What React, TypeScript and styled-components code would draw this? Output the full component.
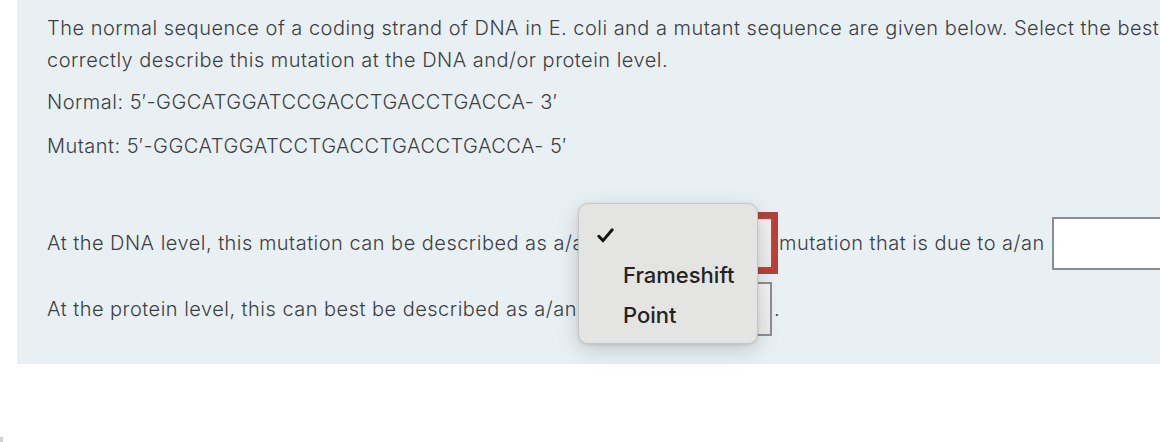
import React from 'react';
import styled, { createGlobalStyle } from 'styled-components';

const GlobalStyle = createGlobalStyle`
  html, body {
    margin: 0;
    padding: 0;
    background: #ffffff;
    overflow: hidden;
  }
  body {
    font-family: "Inter", "Liberation Sans", Arial, sans-serif;
    color: #3d4043;
  }
`;

const Page = styled.div`
  position: relative;
  width: 1160px;
  height: 442px;
  overflow: hidden;
`;

const Panel = styled.section`
  margin-left: 17px;
  width: 1300px;
  height: 364px;
  box-sizing: border-box;
  background: #e8f0f3;
  padding: 12px 0 0 30px;
  font-size: 20px;
  font-weight: 300;
  letter-spacing: 0.48px;
  line-height: 32px;
  white-space: nowrap;
`;

const Para = styled.p<{ $top?: number }>`
  margin: ${(p) => p.$top ?? 0}px 0 0 0;
`;

const Row = styled.div<{ $top: number; $height: number }>`
  display: flex;
  align-items: center;
  height: ${(p) => p.$height}px;
  margin-top: ${(p) => p.$top}px;
`;

const Select = styled.div<{ $width: number; $invalid?: boolean; $height: number }>`
  box-sizing: border-box;
  width: ${(p) => p.$width}px;
  height: ${(p) => p.$height}px;
  margin-left: 4px;
  background: linear-gradient(#f3f3f3, #ececec);
  border: ${(p) => (p.$invalid ? '2px solid #e2352b' : '2px solid #8b8f95')};
  box-shadow: ${(p) => (p.$invalid ? '0 0 0 5px #a9463f' : 'none')};
`;

const Label = styled.span<{ $gap: number }>`
  margin-left: ${(p) => p.$gap}px;
`;

const Input = styled.div`
  box-sizing: border-box;
  width: 140px;
  height: 53px;
  margin-left: 7px;
  background: #ffffff;
  border: 2px solid #8b8f95;
`;

const Popup = styled.div`
  position: absolute;
  left: 578px;
  top: 203px;
  width: 180px;
  height: 141px;
  box-sizing: border-box;
  background: #e4e4e3;
  border: 1px solid #c4c6c8;
  border-radius: 10px;
  box-shadow: 0 6px 22px rgba(0, 0, 0, 0.16), 0 1px 3px rgba(0, 0, 0, 0.12);
  padding-top: 11px;
  font-family: "Inter", "Liberation Sans", sans-serif;
  font-size: 22px;
  font-weight: 500;
  color: #232323;
`;

const Option = styled.div`
  display: flex;
  align-items: center;
  height: 40px;
  padding-left: 18px;
`;

const Check = styled.span`
  width: 26px;
  display: flex;
  align-items: center;
`;

const Corner = styled.div`
  position: absolute;
  left: 0;
  bottom: 0;
  width: 3px;
  height: 5px;
  background: #cfd1d3;
`;

export default function App() {
  return (
    <Page>
      <GlobalStyle />
      <Panel>
        <Para>
          The normal sequence of a coding strand of DNA in E. coli and a mutant sequence are given below. Select the best
        </Para>
        <Para>correctly describe this mutation at the DNA and/or protein level.</Para>
        <Para $top={10}>Normal: 5′-GGCATGGATCCGACCTGACCTGACCA- 3′</Para>
        <Para $top={12}>Mutant: 5′-GGCATGGATCCTGACCTGACCTGACCA- 5′</Para>
        <Row $top={51} $height={60}>
          <span>At the DNA level, this mutation can be described as a/an</span>
          <Select $width={173} $height={52} $invalid />
          <Label $gap={6}>mutation that is due to a/an</Label>
          <Input />
        </Row>
        <Row $top={9} $height={54}>
          <span>At the protein level, this can best be described as a/an</span>
          <Select $width={191} $height={54} />
          <Label $gap={2}>.</Label>
        </Row>
      </Panel>
      <Popup>
        <Option>
          <Check>
            <svg width="17" height="15" viewBox="0 0 17 15">
              <path d="M1.8 8.2 L6 12.6 L15.2 1.8" fill="none" stroke="#111" strokeWidth="2.9" strokeLinecap="round" strokeLinejoin="miter" />
            </svg>
          </Check>
        </Option>
        <Option>
          <Check />
          <span>Frameshift</span>
        </Option>
        <Option>
          <Check />
          <span>Point</span>
        </Option>
      </Popup>
      <Corner />
    </Page>
  );
}
